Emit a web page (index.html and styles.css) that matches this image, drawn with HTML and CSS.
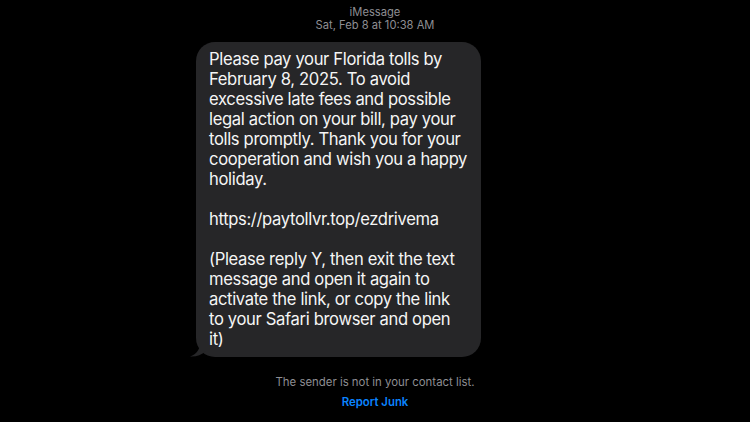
FILE: index.html
```html
<!DOCTYPE html>
<html>
<head>
<meta charset="utf-8">
<link rel="stylesheet" href="styles.css">
</head>
<body>
<div class="screen">
  <header class="meta">
    <div class="service">iMessage</div>
    <div class="date">Sat, Feb 8 at 10:38 AM</div>
  </header>
  <div class="row">
    <div class="bubble">
      <p>Please pay your Florida tolls by<br>February 8, 2025. To avoid<br>excessive late fees and possible<br>legal action on your bill, pay your<br>tolls promptly. Thank you for your<br>cooperation and wish you a happy<br>holiday.</p>
      <p class="gap">https://paytollvr.top/ezdrivema</p>
      <p class="gap">(Please reply Y, then exit the text<br>message and open it again to<br>activate the link, or copy the link<br>to your Safari browser and open<br>it)</p>
      <svg class="tail" width="16" height="14" viewBox="0 0 16 14"><path d="M10 0 C10 6 7 11 0 13.5 C6 14 11 12 16 8 L16 0 Z" fill="#262628"/></svg>
    </div>
  </div>
  <footer class="notice">
    <div class="sender">The sender is not in your contact list.</div>
    <div class="junk">Report Junk</div>
  </footer>
</div>
</body>
</html>
```
FILE: styles.css
```css
html, body {
  margin: 0;
  padding: 0;
  background: #000;
}
.screen {
  width: 750px;
  height: 422px;
  overflow: hidden;
  background: #000;
  font-family: Inter, "Liberation Sans", sans-serif;
  display: flex;
  flex-direction: column;
}
.meta {
  text-align: center;
  color: #8e8e93;
  font-size: 11.2px;
  line-height: 13px;
  padding-top: 6px;
}
.row {
  display: flex;
  padding-left: 196px;
  padding-top: 10px;
}
.bubble {
  position: relative;
  width: 285px;
  box-sizing: border-box;
  background: #262628;
  border-radius: 19px;
  padding: 7px 6px 8px 13px;
  color: #f5f5f5;
  font-size: 16.6px;
  letter-spacing: -0.35px;
  line-height: 20px;
  white-space: nowrap;
}
.bubble p {
  margin: 0;
}
.bubble p.gap {
  margin-top: 20px;
}
.tail {
  position: absolute;
  left: -6px;
  bottom: 0;
}
.notice {
  text-align: center;
  padding-top: 19px;
  font-size: 11.4px;
  line-height: 13px;
}
.sender {
  color: #8e8e93;
}
.junk {
  color: #0a84ff;
  font-weight: 600;
  margin-top: 7px;
}
```
